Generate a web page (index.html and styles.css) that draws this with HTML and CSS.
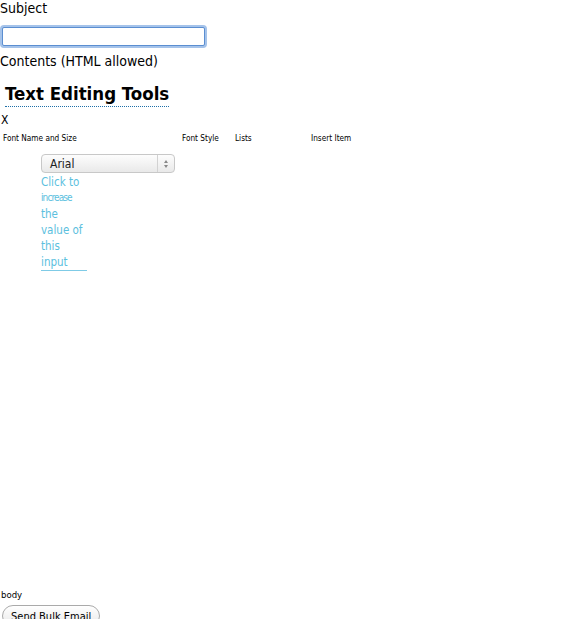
FILE: index.html
```html
<!DOCTYPE html>
<html>
<head>
<meta charset="utf-8">
<link rel="stylesheet" href="styles.css">
</head>
<body>
<div class="page">
  <label class="lbl subject">Subject</label>
  <div class="subject-input"></div>
  <label class="lbl contents">Contents (HTML allowed)</label>
  <h2 class="tools-title">Text Editing Tools</h2>
  <div class="close">X</div>
  <div class="toolbar">
    <div class="col col-font">
      <div class="col-head">Font Name and Size</div>
      <div class="font-body">
        <div class="select"><span class="select-val">Arial</span><span class="select-arrows"><span class="up"></span><span class="down"></span></span></div>
        <div class="spin-link"><span>Click to</span><span class="squish">increase</span><span>the</span><span>value of</span><span>this</span><span class="last">input</span></div>
      </div>
    </div>
    <div class="col col-style"><div class="col-head">Font Style</div></div>
    <div class="col col-lists"><div class="col-head">Lists</div></div>
    <div class="col col-insert"><div class="col-head">Insert Item</div></div>
  </div>
  <div class="body-label">body</div>
  <button class="send">Send Bulk Email</button>
</div>
</body>
</html>
```
FILE: styles.css
```css
html, body { margin: 0; padding: 0; background: #fff; }
body { font-family: "DejaVu Sans Condensed", "DejaVu Sans", Verdana, sans-serif; color: #000; overflow: hidden; height: 619px; }
.page { display: flex; flex-direction: column; align-items: flex-start; }
.lbl { font-size: 14px; line-height: 16px; display: block; }
.subject-input {
  margin-top: 11px;
  margin-left: 2px;
  width: 201px; height: 17px;
  border: 1px solid #5b8ed1;
  box-shadow: 0 0 0 2px #a5c3ea;
  border-radius: 2px;
  background: #fff;
}
.contents { margin-top: 7px; }
.tools-title {
  margin: 14px 0 0 5px;
  font-size: 18.5px; font-weight: bold; line-height: 22px;
  border-bottom: 1px dotted #1d6fa8;
  padding-bottom: 1px;
}
.close { font-size: 12px; line-height: 14px; margin-top: 6px; margin-left: 1px; }
.toolbar { display: flex; margin-top: 5px; font-size: 8.2px; }
.col-head { line-height: 12px; }
.col-font { width: 179px; padding-left: 3px; }
.col-style { width: 53px; }
.col-lists { width: 76px; }
.font-body { padding-left: 38px; padding-top: 10px; }
.select {
  width: 132px; height: 17px;
  border: 1px solid #c8c8c8; border-radius: 4px;
  background: linear-gradient(#fdfdfd, #e9e9e9);
  display: flex; align-items: center; justify-content: space-between;
}
.select-val { font-size: 12px; padding-left: 8px; color: #222; }
.select-arrows { width: 16px; height: 17px; border-left: 1px solid #d2d2d2; display: flex; flex-direction: column; align-items: center; justify-content: center; gap: 2px; }
.up { width: 0; height: 0; border-left: 2px solid transparent; border-right: 2px solid transparent; border-bottom: 3px solid #888; }
.down { width: 0; height: 0; border-left: 2px solid transparent; border-right: 2px solid transparent; border-top: 3px solid #888; }
.spin-link { display: flex; flex-direction: column; color: #5bc0de; font-size: 11.5px; line-height: 16px; margin-top: 1px; width: 46px; border-bottom: 1px solid #7fcbe6; }
.spin-link span { white-space: nowrap; }
.squish { font-size: 10px; letter-spacing: -0.9px; }
.body-label { margin-top: 318px; font-size: 9.5px; line-height: 12px; margin-left: 1px; }
.send {
  margin-top: 4px; margin-left: 2px;
  font-family: "DejaVu Sans Condensed", sans-serif; font-size: 11px;
  height: 22px; padding: 0 8px;
  border: 1px solid #aaa; border-radius: 11px;
  background: linear-gradient(#fff, #e8e8e8);
}
```
